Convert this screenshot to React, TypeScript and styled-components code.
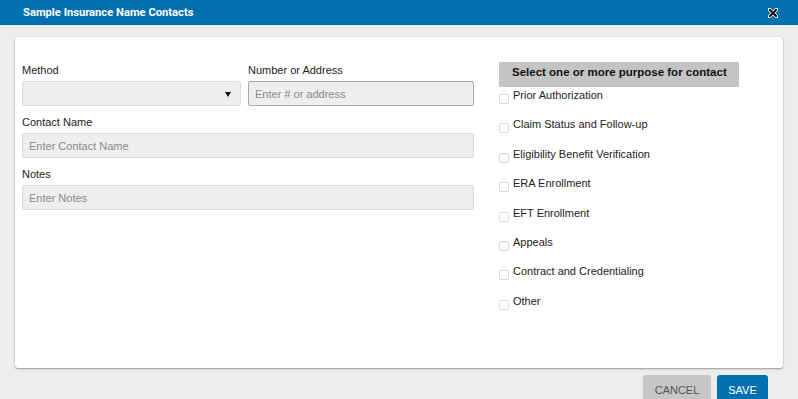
import React from "react";
import styled, { createGlobalStyle } from "styled-components";

const Global = createGlobalStyle`
  html, body { margin: 0; padding: 0; }
  body {
    background: #ededed;
    font-family: "Liberation Sans", Arial, sans-serif;
    overflow: hidden;
  }
  * { box-sizing: border-box; }
`;

const Page = styled.div`
  width: 798px;
  height: 399px;
  display: flex;
  flex-direction: column;
  overflow: hidden;
  background: #ededed;
`;

const Header = styled.div`
  height: 25px;
  flex: none;
  background: #0070b1;
  display: flex;
  align-items: center;
  justify-content: space-between;
  padding: 0 20px 1px 23px;
`;

const Title = styled.div`
  font-family: Roboto, "Liberation Sans", sans-serif;
  font-weight: 700;
  font-size: 11.2px;
  color: #ffffff;
`;

const CloseBtn = styled.div`
  width: 10px;
  height: 10px;
  display: flex;
  margin-top: 2px;
`;

const Main = styled.div`
  padding: 12px 15px 0 15px;
`;

const Card = styled.div`
  height: 331px;
  background: #fff;
  border-radius: 3px;
  box-shadow: 0 1px 2px rgba(0, 0, 0, 0.35), 0 0 1px rgba(0, 0, 0, 0.2);
  display: flex;
  padding: 25px 0 0 7px;
  gap: 25px;
`;

const LeftCol = styled.div`
  width: 452px;
  display: flex;
  flex-direction: column;
  gap: 9px;
  padding-top: 1px;
`;

const Row = styled.div`
  display: flex;
  gap: 7px;
`;

const Field = styled.div<{ $w?: number }>`
  display: flex;
  flex-direction: column;
  gap: 4px;
  width: ${(p) => (p.$w ? `${p.$w}px` : "100%")};
`;

const Label = styled.div`
  font-size: 11px;
  line-height: 14px;
  color: #222;
`;

const Input = styled.div<{ $dark?: boolean }>`
  height: 25px;
  background: #eeeeee;
  border: 1px solid ${(p) => (p.$dark ? "#a8a8a8" : "#dddddd")};
  border-radius: 2px;
  display: flex;
  align-items: center;
  padding: 0 6px;
  font-size: 11px;
  color: #8a8a8a;
`;

const Select = styled(Input)`
  justify-content: flex-end;
  padding-right: 9px;
`;

const Arrow = styled.span`
  width: 0;
  height: 0;
  border-left: 3.5px solid transparent;
  border-right: 3.5px solid transparent;
  border-top: 5px solid #111;
  margin-top: 2px;
`;

const RightCol = styled.div`
  display: flex;
  flex-direction: column;
`;

const PurposeHead = styled.div`
  width: 240px;
  height: 25px;
  background: #c4c4c4;
  font-weight: 700;
  font-size: 11.5px;
  color: #111;
  padding: 3px 0 0 13px;
  line-height: 14px;
`;

const List = styled.div`
  display: flex;
  flex-direction: column;
  gap: 13.4px;
  padding-top: 1px;
`;

const Item = styled.label`
  display: flex;
  align-items: flex-start;
  gap: 4px;
  font-size: 11px;
  line-height: 14px;
  height: 16px;
  color: #222;
`;

const Box = styled.span`
  width: 10px;
  height: 10px;
  border: 1px solid #dadada;
  border-radius: 2px;
  margin-top: 6px;
  flex: none;
  background: #fff;
`;

const Footer = styled.div`
  display: flex;
  justify-content: flex-end;
  gap: 6px;
  padding: 7px 30px 0 0;
`;

const Button = styled.div<{ $primary?: boolean; $w: number }>`
  width: ${(p) => p.$w}px;
  height: 30px;
  border-radius: 3px 3px 0 0;
  background: ${(p) => (p.$primary ? "#0070b1" : "#c6c6c6")};
  color: ${(p) => (p.$primary ? "#fff" : "#555")};
  font-size: 11px;
  display: flex;
  justify-content: center;
  padding-top: 8px;
  line-height: 14px;
`;

const purposes = [
  "Prior Authorization",
  "Claim Status and Follow-up",
  "Eligibility Benefit Verification",
  "ERA Enrollment",
  "EFT Enrollment",
  "Appeals",
  "Contract and Credentialing",
  "Other",
];

export default function App() {
  return (
    <>
      <Global />
      <Page>
        <Header>
          <Title>Sample Insurance Name Contacts</Title>
          <CloseBtn>
            <svg width="10" height="10" viewBox="0 0 10 10">
              <path d="M1.5 1.5 L8.5 8.5 M8.5 1.5 L1.5 8.5" stroke="#ffffff" strokeWidth="3.6" strokeLinecap="square" />
              <path d="M2 2 L8 8 M8 2 L2 8" stroke="#000" strokeWidth="2" strokeLinecap="square" />
            </svg>
          </CloseBtn>
        </Header>
        <Main>
          <Card>
            <LeftCol>
              <Row>
                <Field $w={219}>
                  <Label>Method</Label>
                  <Select>
                    <Arrow />
                  </Select>
                </Field>
                <Field $w={226}>
                  <Label>Number or Address</Label>
                  <Input $dark>Enter # or address</Input>
                </Field>
              </Row>
              <Field>
                <Label>Contact Name</Label>
                <Input>Enter Contact Name</Input>
              </Field>
              <Field>
                <Label>Notes</Label>
                <Input>Enter Notes</Input>
              </Field>
            </LeftCol>
            <RightCol>
              <PurposeHead>Select one or more purpose for contact</PurposeHead>
              <List>
                {purposes.map((p) => (
                  <Item key={p}>
                    <Box />
                    {p}
                  </Item>
                ))}
              </List>
            </RightCol>
          </Card>
        </Main>
        <Footer>
          <Button $w={68}>CANCEL</Button>
          <Button $w={51} $primary>
            SAVE
          </Button>
        </Footer>
      </Page>
    </>
  );
}
